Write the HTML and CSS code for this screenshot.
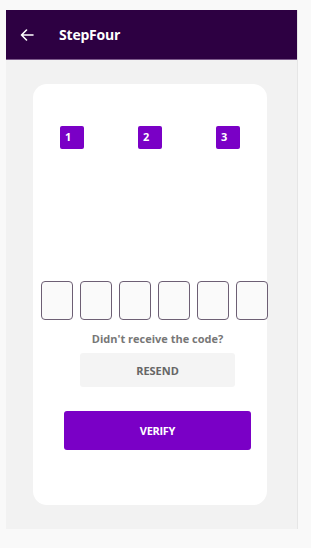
FILE: index.html
```html
<!DOCTYPE html>
<html lang="en">

<head>
    <meta charset="UTF-8">
    <meta name="viewport" content="width=device-width, initial-scale=1.0">
    <title>StepFour</title>
    <link rel="stylesheet" href="styles.css">
</head>

<body>

    <div class="app">
        <header class="topbar">
            <svg class="back" width="14" height="12" viewBox="0 0 14 12">
                <path d="M13 6H1.5M6.5 1L1.5 6l5 5" fill="none" stroke="#fff" stroke-width="1.6" stroke-linecap="round" stroke-linejoin="round"/>
            </svg>
            <h1>StepFour</h1>
        </header>

        <main class="content">
            <div class="card">
                <div class="steps">
                    <span class="step">1</span>
                    <span class="step">2</span>
                    <span class="step">3</span>
                </div>

                <div class="otp">
                    <input type="text" maxlength="1">
                    <input type="text" maxlength="1">
                    <input type="text" maxlength="1">
                    <input type="text" maxlength="1">
                    <input type="text" maxlength="1">
                    <input type="text" maxlength="1">
                </div>

                <div class="actions">
                    <p class="hint">Didn't receive the code?</p>
                    <button type="button" class="resend">RESEND</button>
                    <button type="button" class="verify">VERIFY</button>
                </div>
            </div>
        </main>
    </div>

    <div class="footer"></div>

</body>

</html>
```

FILE: styles.css
```css
body {
    font-family: "Open Sans", "Noto Sans", sans-serif;
    margin: 0;
    padding: 10px 0 0 6px;
    background-color: #f9f9f9;
}

.app {
    width: 291px;
    background-color: #f2f2f2;
    border-right: 1px solid #e6e6e6;
}

.topbar {
    height: 49px;
    background-color: #2d0042;
    border-bottom: 1px solid #7d5a8c;
    display: flex;
    align-items: center;
    color: white;
}

.back {
    margin-left: 14px;
    margin-top: 1px;
}

.topbar h1 {
    margin: 0 0 0 25px;
    font-size: 14px;
    font-weight: 700;
    letter-spacing: -0.2px;
}

.content {
    padding: 24px 30px 24px 27px;
}

.card {
    height: 421px;
    background-color: white;
    border-radius: 14px;
    display: flex;
    flex-direction: column;
    align-items: center;
}

.steps {
    display: flex;
    gap: 54px;
    margin-top: 42px;
}

.step {
    width: 24px;
    height: 23px;
    box-sizing: border-box;
    padding: 3px 0 0 5px;
    background-color: #7a00c6;
    border-radius: 2px;
    color: white;
    font-size: 11px;
    font-weight: 700;
}

.otp {
    display: flex;
    gap: 7px;
    margin-top: 132px;
    margin-left: 8px;
}

.otp input {
    width: 32px;
    height: 39px;
    box-sizing: border-box;
    border: 1px solid #6d5f74;
    border-radius: 4px;
    background-color: #fafafa;
    padding: 0;
}

.actions {
    display: flex;
    flex-direction: column;
    align-items: center;
    margin-left: 15px;
}

.hint {
    margin: 11px 0 0 0;
    font-size: 11px;
    font-weight: 700;
    color: #777;
}

.resend {
    width: 155px;
    height: 34px;
    margin-top: 7px;
    border: none;
    border-radius: 3px;
    background-color: #f4f4f4;
    color: #666;
    font-family: inherit;
    font-size: 11px;
    font-weight: 700;
}

.verify {
    width: 187px;
    height: 39px;
    margin-top: 24px;
    border: none;
    border-radius: 3px;
    background-color: #7a00c6;
    color: white;
    font-family: inherit;
    font-size: 11px;
    font-weight: 700;
    letter-spacing: -0.3px;
}

.footer {
    height: 12px;
    margin-top: 11px;
    border-bottom: 1px solid #e4e4e4;
}
```
